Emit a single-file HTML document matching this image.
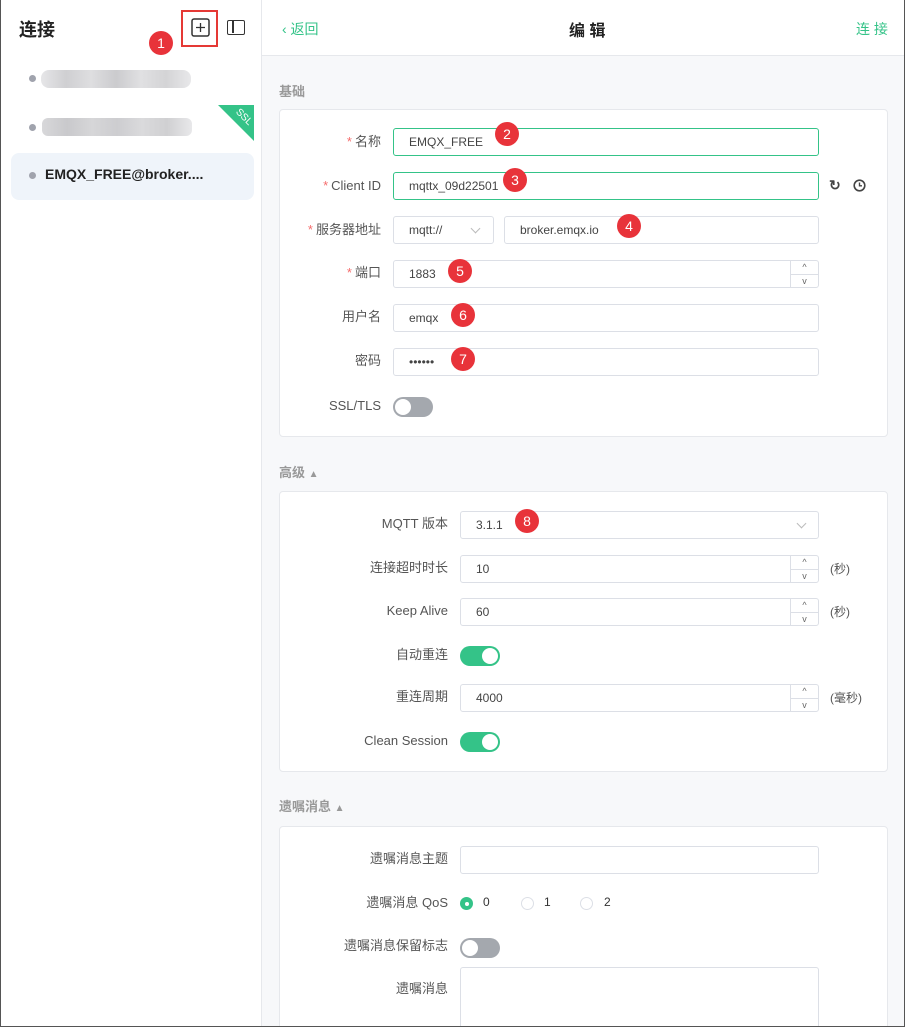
<!DOCTYPE html>
<html style="overflow:hidden;width:905px;height:1027px"><head><meta charset="utf-8"><style>
*{box-sizing:border-box;margin:0;padding:0}
body{width:905px;height:1027px;position:relative;overflow:hidden;background:#f7f8fa;font-family:"Liberation Sans","Noto Sans CJK SC",sans-serif;color:#333;font-size:13px}
.a{position:absolute}
.side{left:0;top:0;width:262px;height:1027px;background:#fff;border-right:1px solid #e6e8ec}
.hdr{left:262px;top:0;width:643px;height:56px;background:#fff;border-bottom:1px solid #e6e8ec}
.card{background:#fff;border:1px solid #e6e8ec;border-radius:4px}
.lbl{text-align:right;font-size:13px;color:#555;line-height:20px}
.lbl i{color:#f56c6c;font-style:normal;margin-right:3px}
.inp{border:1px solid #dcdfe6;border-radius:3px;background:#fff;height:28px;font-size:12px;line-height:26px;padding-left:15px;color:#444}
.inp.g{border-color:#34c388}
.badge{width:24px;height:24px;border-radius:50%;background:#e8333a;color:#fff;font-size:14px;line-height:24px;text-align:center}
.tg{width:40px;height:20px;border-radius:10px;background:#a4a8ae}
.tg:after{content:"";position:absolute;top:2px;left:2px;width:16px;height:16px;border-radius:50%;background:#fff}
.tg.on{background:#34c388}.tg.on:after{left:22px}
.sp{position:absolute;right:0;top:0;width:28px;height:26px;border-left:1px solid #dcdfe6;font-size:9px;color:#666;text-align:center}
.sp div{height:13px;line-height:13px}
.sp div+div{border-top:1px solid #dcdfe6}
.unit{font-size:12px;color:#555}
.sec{font-size:13px;color:#999;font-weight:bold}
.chev{width:7px;height:7px;border-right:1px solid #bbb;border-bottom:1px solid #bbb;transform:rotate(45deg)}
</style></head><body>
<div class="a side">
 <div class="a" style="left:19px;top:16px;font-size:18px;font-weight:bold;color:#222">连接</div>
 <div class="a" style="left:181px;top:10px;width:37px;height:37px;border:2px solid #e53935"></div>
 <svg class="a" style="left:191px;top:18px" width="19" height="19"><rect x="1" y="1" width="17" height="17" rx="2" fill="none" stroke="#333" stroke-width="1.5"/><path d="M9.5 5v9M5 9.5h9" stroke="#333" stroke-width="1.3"/></svg>
 <div class="a" style="left:227px;top:20px;width:18px;height:15px;border:1.5px solid #333;border-radius:2px"><div class="a" style="left:4px;top:0;width:1.5px;height:12px;background:#333"></div></div>
 <div class="a badge" style="left:149px;top:31px">1</div>
 <div class="a" style="left:29px;top:75px;width:7px;height:7px;border-radius:50%;background:#a0a3ad"></div>
 <div class="a" style="left:41px;top:70px;width:150px;height:18px;border-radius:8px;background:linear-gradient(90deg,#e6e6e8,#cfcfd2,#dedee0,#cbcbce,#e0e0e2,#d4d4d6,#e8e8ea)"></div>
 <div class="a" style="left:29px;top:124px;width:7px;height:7px;border-radius:50%;background:#a0a3ad"></div>
 <div class="a" style="left:42px;top:118px;width:150px;height:18px;border-radius:6px;background:linear-gradient(90deg,#d8d8da,#c9c9cc,#d6d6d8,#cdcdd0,#dadadc,#d0d0d2,#e8e8ea)"></div>
 <svg class="a" style="left:218px;top:105px" width="36" height="36"><polygon points="0,0 36,0 36,36" fill="#34c388"/><text x="24" y="14" fill="#fff" font-size="10" font-family="Liberation Sans" transform="rotate(45 24 14)" text-anchor="middle">SSL</text></svg>
 <div class="a" style="left:11px;top:153px;width:243px;height:47px;border-radius:8px;background:#eff4fa"></div>
 <div class="a" style="left:29px;top:172px;width:7px;height:7px;border-radius:50%;background:#a0a3ad"></div>
 <div class="a" style="left:45px;top:166px;font-size:14px;font-weight:bold;color:#222">EMQX_FREE@broker....</div>
</div>
<div class="a hdr">
 <div class="a" style="left:20px;top:19px;color:#34c388;font-size:14px">‹ 返回</div>
 <div class="a" style="left:307px;top:17px;font-size:16px;font-weight:bold;color:#222">编 辑</div>
 <div class="a" style="left:594px;top:19px;color:#34c388;font-size:14px">连 接</div>
</div>
<div class="a sec" style="left:279px;top:81px">基础</div>
<div class="a card" style="left:279px;top:109px;width:609px;height:328px"></div>
<div class="a lbl" style="left:279px;top:132px;width:102px"><i>*</i>名称</div>
<div class="a inp g" style="left:393px;top:128px;width:426px">EMQX_FREE</div>
<div class="a badge" style="left:495px;top:122px">2</div>
<div class="a lbl" style="left:279px;top:176px;width:102px"><i>*</i>Client ID</div>
<div class="a inp g" style="left:393px;top:172px;width:426px">mqttx_09d22501</div>
<div class="a badge" style="left:503px;top:168px">3</div>
<div class="a" style="left:829px;top:177px;font-size:14px;font-weight:bold;color:#444">↻</div>
<svg class="a" style="left:853px;top:179px" width="13" height="13"><circle cx="6.5" cy="6.5" r="5.3" fill="none" stroke="#444" stroke-width="1.6"/><path d="M6.5 3.5V6.8H9" fill="none" stroke="#444" stroke-width="1.4"/></svg>
<div class="a lbl" style="left:279px;top:220px;width:102px"><i>*</i>服务器地址</div>
<div class="a inp" style="left:393px;top:216px;width:101px">mqtt://<div class="a chev" style="left:78px;top:8px"></div></div>
<div class="a inp" style="left:504px;top:216px;width:315px">broker.emqx.io</div>
<div class="a badge" style="left:617px;top:214px">4</div>
<div class="a lbl" style="left:279px;top:263px;width:102px"><i>*</i>端口</div>
<div class="a inp" style="left:393px;top:260px;width:426px">1883<div class="sp"><div>^</div><div>v</div></div></div>
<div class="a badge" style="left:448px;top:259px">5</div>
<div class="a lbl" style="left:279px;top:307px;width:102px">用户名</div>
<div class="a inp" style="left:393px;top:304px;width:426px">emqx</div>
<div class="a badge" style="left:451px;top:303px">6</div>
<div class="a lbl" style="left:279px;top:351px;width:102px">密码</div>
<div class="a inp" style="left:393px;top:348px;width:426px">••••••</div>
<div class="a badge" style="left:451px;top:347px">7</div>
<div class="a lbl" style="left:279px;top:396px;width:102px">SSL/TLS</div>
<div class="a tg" style="left:393px;top:397px"></div>

<div class="a sec" style="left:279px;top:462px">高级 <span style="font-size:10px">▲</span></div>
<div class="a card" style="left:279px;top:491px;width:609px;height:281px"></div>
<div class="a lbl" style="left:279px;top:514px;width:169px">MQTT 版本</div>
<div class="a inp" style="left:460px;top:511px;width:359px">3.1.1<div class="a chev" style="left:337px;top:8px"></div></div>
<div class="a badge" style="left:515px;top:509px">8</div>
<div class="a lbl" style="left:279px;top:558px;width:169px">连接超时时长</div>
<div class="a inp" style="left:460px;top:555px;width:359px">10<div class="sp"><div>^</div><div>v</div></div></div>
<div class="a unit" style="left:830px;top:560px">(秒)</div>
<div class="a lbl" style="left:279px;top:601px;width:169px">Keep Alive</div>
<div class="a inp" style="left:460px;top:598px;width:359px">60<div class="sp"><div>^</div><div>v</div></div></div>
<div class="a unit" style="left:830px;top:603px">(秒)</div>
<div class="a lbl" style="left:279px;top:645px;width:169px">自动重连</div>
<div class="a tg on" style="left:460px;top:646px"></div>
<div class="a lbl" style="left:279px;top:687px;width:169px">重连周期</div>
<div class="a inp" style="left:460px;top:684px;width:359px">4000<div class="sp"><div>^</div><div>v</div></div></div>
<div class="a unit" style="left:830px;top:689px">(毫秒)</div>
<div class="a lbl" style="left:279px;top:731px;width:169px">Clean Session</div>
<div class="a tg on" style="left:460px;top:732px"></div>

<div class="a sec" style="left:279px;top:796px">遗嘱消息 <span style="font-size:10px">▲</span></div>
<div class="a card" style="left:279px;top:826px;width:609px;height:210px"></div>
<div class="a lbl" style="left:279px;top:849px;width:169px">遗嘱消息主题</div>
<div class="a inp" style="left:460px;top:846px;width:359px"></div>
<div class="a lbl" style="left:279px;top:893px;width:169px">遗嘱消息 QoS</div>
<div class="a" style="left:460px;top:897px;width:13px;height:13px;border-radius:50%;background:#34c388"><div class="a" style="left:4.5px;top:4.5px;width:4px;height:4px;border-radius:50%;background:#fff"></div></div>
<div class="a" style="left:483px;top:895px;font-size:12px">0</div>
<div class="a" style="left:521px;top:897px;width:13px;height:13px;border-radius:50%;border:1px solid #dcdfe6"></div>
<div class="a" style="left:544px;top:895px;font-size:12px">1</div>
<div class="a" style="left:580px;top:897px;width:13px;height:13px;border-radius:50%;border:1px solid #dcdfe6"></div>
<div class="a" style="left:604px;top:895px;font-size:12px">2</div>
<div class="a lbl" style="left:279px;top:936px;width:169px">遗嘱消息保留标志</div>
<div class="a tg" style="left:460px;top:938px"></div>
<div class="a lbl" style="left:279px;top:979px;width:169px">遗嘱消息</div>
<div class="a inp" style="left:460px;top:967px;width:359px;height:70px"></div>
<div class="a" style="left:0;top:0;width:1px;height:1027px;background:#555"></div>
<div class="a" style="left:904px;top:0;width:1px;height:1027px;background:#555"></div>
<div class="a" style="left:0;top:1026px;width:905px;height:1px;background:#555"></div>
</body></html>
